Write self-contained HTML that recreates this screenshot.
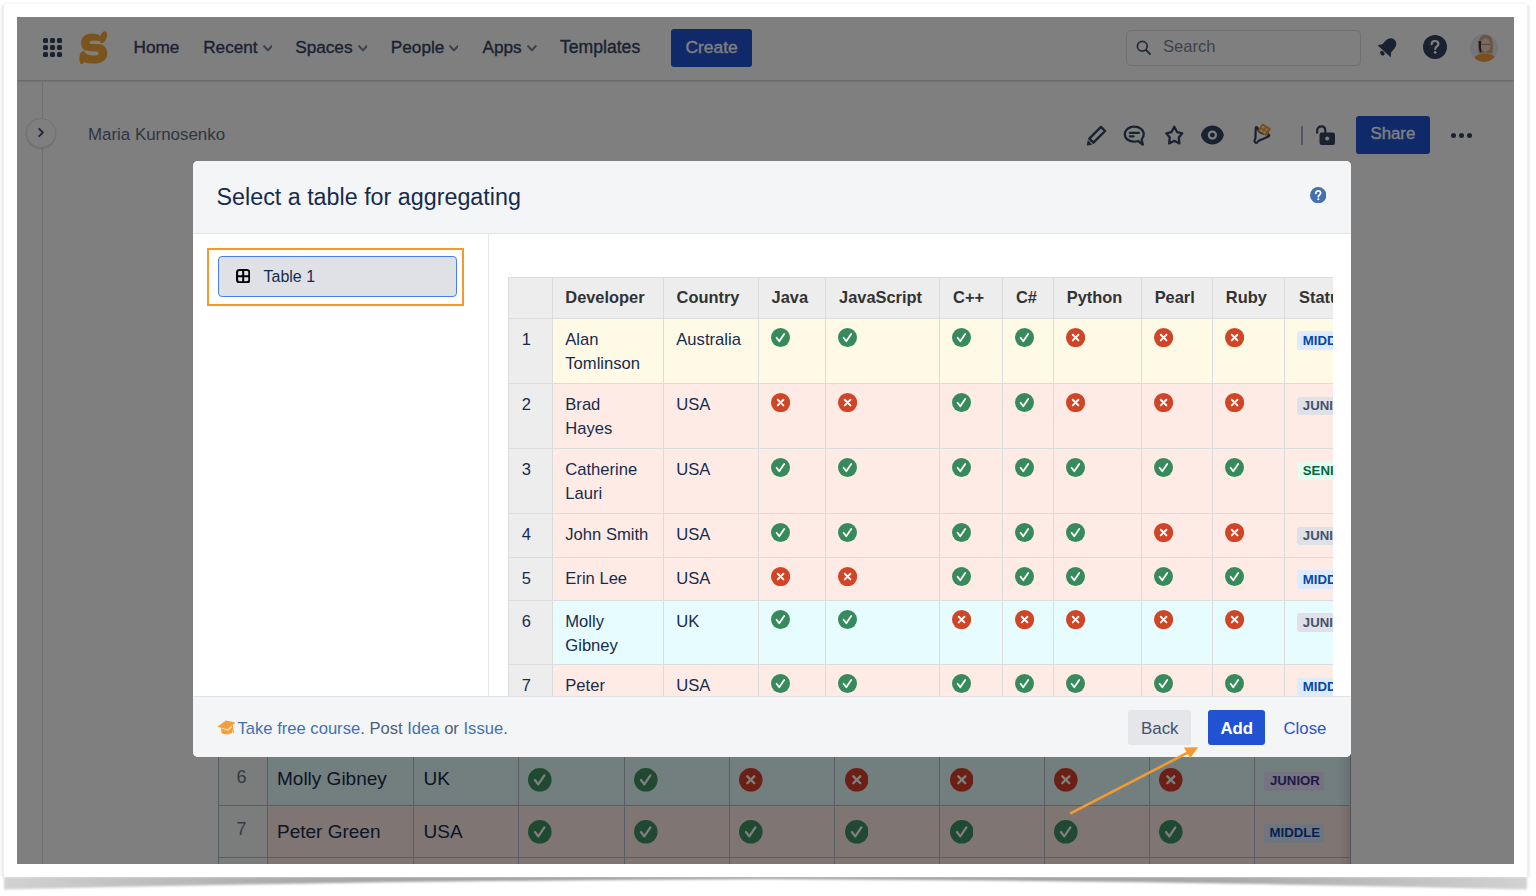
<!DOCTYPE html>
<html><head><meta charset="utf-8"><title>Select a table</title>
<style>
html,body{margin:0;padding:0;}
body{width:1536px;height:896px;position:relative;overflow:hidden;background:#fff;font-family:"Liberation Sans",sans-serif;}
.t{position:absolute;white-space:nowrap;line-height:1;-webkit-font-smoothing:antialiased;}
.abs{position:absolute;}
</style></head><body>

<svg class="abs" style="left:0;top:0" width="1536" height="896" viewBox="0 0 1536 896">
<defs>
<filter id="bl" x="-5%" y="-50%" width="110%" height="200%"><feGaussianBlur stdDeviation="1.1"/></filter>
<filter id="bl2" x="-50%" y="-5%" width="200%" height="110%"><feGaussianBlur stdDeviation="0.9"/></filter>
<linearGradient id="sg" x1="0" y1="0" x2="1" y2="0">
<stop offset="0" stop-color="#d2d2d2"/><stop offset="0.2" stop-color="#a8a8a8"/><stop offset="0.5" stop-color="#969696"/><stop offset="0.8" stop-color="#a8a8a8"/><stop offset="1" stop-color="#d2d2d2"/></linearGradient>
</defs>
<path d="M4 876.5 L1527 876.5 L1527 889.5 Q1150 880.5 768 879 Q386 880.5 4 889.5 Z" fill="url(#sg)" filter="url(#bl)"/>
<rect x="1.8" y="5" width="2.6" height="872" fill="#e4e4e4" filter="url(#bl2)"/>
<rect x="1526.6" y="5" width="2.6" height="872" fill="#e4e4e4" filter="url(#bl2)"/>
<rect x="4" y="3" width="1523" height="1.6" fill="#eeeeee" filter="url(#bl)"/>
</svg>
<div class="abs" style="left:4px;top:4px;width:1523px;height:873px;background:#fff"></div>

<div class="abs" style="left:17px;top:17px;width:1497px;height:847px;overflow:hidden;background:#fff">
<div class="abs" style="left:-17px;top:-17px;width:1536px;height:896px">
<div style="position:absolute;left:17.00px;top:17.00px;width:1497.00px;height:63.00px;background:#fff;box-shadow:0 1px 2px rgba(9,30,66,0.28)"></div>
<div style="position:absolute;left:43.00px;top:37.50px;width:5.00px;height:5.00px;background:#344563;border-radius:1.5px"></div>
<div style="position:absolute;left:50.00px;top:37.50px;width:5.00px;height:5.00px;background:#344563;border-radius:1.5px"></div>
<div style="position:absolute;left:57.00px;top:37.50px;width:5.00px;height:5.00px;background:#344563;border-radius:1.5px"></div>
<div style="position:absolute;left:43.00px;top:44.50px;width:5.00px;height:5.00px;background:#344563;border-radius:1.5px"></div>
<div style="position:absolute;left:50.00px;top:44.50px;width:5.00px;height:5.00px;background:#344563;border-radius:1.5px"></div>
<div style="position:absolute;left:57.00px;top:44.50px;width:5.00px;height:5.00px;background:#344563;border-radius:1.5px"></div>
<div style="position:absolute;left:43.00px;top:51.50px;width:5.00px;height:5.00px;background:#344563;border-radius:1.5px"></div>
<div style="position:absolute;left:50.00px;top:51.50px;width:5.00px;height:5.00px;background:#344563;border-radius:1.5px"></div>
<div style="position:absolute;left:57.00px;top:51.50px;width:5.00px;height:5.00px;background:#344563;border-radius:1.5px"></div>
<svg class="abs" style="left:74px;top:27px" width="40" height="40" viewBox="0 0 40 40">
<path fill="#F6A73A" d="M17.9 6.5 C11 6.5 7.1 10.5 7.1 16 C7.1 19.2 8.2 21.8 10.6 23.6 C12.5 24.3 16 24.3 19 24.3 C22.8 24.3 24.8 25.2 24.8 26.4 C24.8 27.8 22.6 28.6 19.2 28.6 C15.6 28.6 12.8 27.6 11.5 25.8 C10.5 24.6 9.8 24.2 9.5 24.1 C7 24.6 5.4 27 5.4 31 C5.4 34 6 37 7.5 37 C8.5 37 9.5 36.5 10 35.2 C12.5 36 16 36.6 20.5 36.6 C28.5 36.6 33.3 32.5 33.3 26.5 C33.3 22 31 19 27.5 17.6 C26 17.2 23.2 17 20.3 17 C17.5 17 15.2 16.5 15.2 15.4 C15.2 14.3 17.5 13.8 20.3 13.8 C23 13.8 25.5 14 27 14.5 L26.5 9 C25 7.5 22 6.5 17.9 6.5 Z"/>
<ellipse cx="29.4" cy="10.2" rx="3.3" ry="6.2" transform="rotate(18 29.4 10.2)" fill="#F6A73A"/>
</svg>
<div class="t" style="left:133.50px;top:39px;font-size:17.2px;color:#344563;font-weight:500;-webkit-text-stroke:0.35px #344563">Home</div>
<div class="t" style="left:203.20px;top:39px;font-size:17.2px;color:#344563;font-weight:500;-webkit-text-stroke:0.35px #344563">Recent</div>
<svg style="position:absolute;left:262.50px;top:44.60px" width="9.8" height="7.2" viewBox="0 0 9.8 7.2"><path d="M1.1 1.2 L4.9 5.4 L8.700000000000001 1.2" fill="none" stroke="#7A869A" stroke-width="2.1" stroke-linecap="round" stroke-linejoin="round"/></svg>
<div class="t" style="left:295.20px;top:39px;font-size:17.2px;color:#344563;font-weight:500;-webkit-text-stroke:0.35px #344563">Spaces</div>
<svg style="position:absolute;left:357.50px;top:44.60px" width="9.8" height="7.2" viewBox="0 0 9.8 7.2"><path d="M1.1 1.2 L4.9 5.4 L8.700000000000001 1.2" fill="none" stroke="#7A869A" stroke-width="2.1" stroke-linecap="round" stroke-linejoin="round"/></svg>
<div class="t" style="left:390.80px;top:39px;font-size:17.2px;color:#344563;font-weight:500;-webkit-text-stroke:0.35px #344563">People</div>
<svg style="position:absolute;left:448.50px;top:44.60px" width="9.8" height="7.2" viewBox="0 0 9.8 7.2"><path d="M1.1 1.2 L4.9 5.4 L8.700000000000001 1.2" fill="none" stroke="#7A869A" stroke-width="2.1" stroke-linecap="round" stroke-linejoin="round"/></svg>
<div class="t" style="left:482.50px;top:39px;font-size:17.2px;color:#344563;font-weight:500;-webkit-text-stroke:0.35px #344563">Apps</div>
<svg style="position:absolute;left:527.00px;top:44.60px" width="9.8" height="7.2" viewBox="0 0 9.8 7.2"><path d="M1.1 1.2 L4.9 5.4 L8.700000000000001 1.2" fill="none" stroke="#7A869A" stroke-width="2.1" stroke-linecap="round" stroke-linejoin="round"/></svg>
<div class="t" style="left:560.00px;top:39px;font-size:17.6px;color:#344563;font-weight:500;-webkit-text-stroke:0.35px #344563">Templates</div>
<div style="position:absolute;left:671.00px;top:29.00px;width:81.00px;height:38.00px;background:#2152D1;border-radius:3px"></div>
<div class="t" style="left:685.50px;top:39px;font-size:17.4px;color:#fff;font-weight:500;-webkit-text-stroke:0.35px #fff">Create</div>
<div style="position:absolute;left:1126.00px;top:29.50px;width:235.00px;height:36.00px;box-sizing:border-box;border:1px solid #DFE1E6;border-radius:5px;background:#fff"></div>
<svg class="abs" style="left:1136px;top:40px" width="16" height="15" viewBox="0 0 16 15">
<circle cx="6.3" cy="6.3" r="4.9" fill="none" stroke="#42526E" stroke-width="1.7"/><path d="M10 10 L14 14" stroke="#42526E" stroke-width="1.8" stroke-linecap="round"/></svg>
<div class="t" style="left:1163.00px;top:39px;font-size:16.6px;color:#7A869A;font-weight:400;">Search</div>
<svg class="abs" style="left:1375px;top:35px" width="25" height="25" viewBox="0 0 25 25">
<g transform="rotate(42 12.5 12.5)"><path d="M12.5 2.2 C8.4 2.2 6.6 5.5 6.6 9.2 L6.6 13.6 L3.6 17.6 L21.4 17.6 L18.4 13.6 L18.4 9.2 C18.4 5.5 16.6 2.2 12.5 2.2 Z" fill="#344563"/>
<ellipse cx="12.5" cy="20.2" rx="2.6" ry="1.9" fill="#344563"/></g></svg>
<svg class="abs" style="left:1423px;top:35px" width="24" height="24" viewBox="0 0 24 24">
<circle cx="12" cy="12" r="12" fill="#344563"/>
<path d="M8.6 9.3 C8.6 7.2 10.1 6 12 6 C13.9 6 15.4 7.2 15.4 9 C15.4 11.3 12.2 11.5 12.2 14" fill="none" stroke="#fff" stroke-width="2.2" stroke-linecap="round"/>
<circle cx="12.2" cy="17.4" r="1.4" fill="#fff"/></svg>
<svg class="abs" style="left:1470.3px;top:33.5px" width="28" height="28" viewBox="0 0 28 28">
<defs><clipPath id="av"><circle cx="14" cy="14" r="13.9"/></clipPath></defs>
<g clip-path="url(#av)"><rect width="28" height="28" fill="#E8EBF0"/>
<path d="M8.5 19.5 C8 12 8.3 5 11.5 2 C13.5 0.5 18 0.5 20.3 2.3 C23 5 23.3 12 22.5 19.5 Z" fill="#D9A985"/>
<ellipse cx="15.4" cy="11" rx="5" ry="6.8" fill="#F3D6C4"/>
<path d="M8.6 7 C8.4 11 8.8 15.5 10.2 18.5 L11.6 18 C10.8 14.5 10.8 10.5 11.3 7 Z" fill="#4A3530"/>
<path d="M11 10.3 L20 10.3" stroke="#8A6A5A" stroke-width="0.7"/>
<rect x="13.9" y="17" width="3" height="4" fill="#E9C3AE"/>
<path d="M3 29 C3.5 23 7 20.3 12 20 L19 20 C23.5 20.3 25.5 23 25.8 29 Z" fill="#F09E3A"/></g></svg>
<div style="position:absolute;left:42.00px;top:80.00px;width:1.00px;height:784.00px;background:#E0E2E6"></div>
<div style="position:absolute;left:26.00px;top:117.50px;width:30.00px;height:30.00px;box-sizing:border-box;border:1px solid #E4E6EA;border-radius:50%;background:#fff;box-shadow:0 1px 2px rgba(9,30,66,0.18)"></div>
<svg class="abs" style="left:36px;top:127px" width="10" height="11" viewBox="0 0 10 11">
<path d="M3.2 1.8 L6.9 5.5 L3.2 9.2" fill="none" stroke="#42526E" stroke-width="1.9" stroke-linecap="round" stroke-linejoin="round"/></svg>
<div class="t" style="left:88.00px;top:127px;font-size:16.9px;color:#5E6C84;font-weight:400;">Maria Kurnosenko</div>
<svg class="abs" style="left:1085px;top:124px" width="23" height="23" viewBox="0 0 23 23">
<path d="M16 2.9 L20.1 7 L8.4 18.7 L4.3 14.6 Z" fill="none" stroke="#344563" stroke-width="2.4" stroke-linejoin="round"/>
<path d="M2.1 21.2 L2.9 16.6 L6.8 20.4 Z" fill="#344563" stroke="#344563" stroke-width="0.6" stroke-linejoin="round"/></svg>
<svg class="abs" style="left:1122px;top:124px" width="24" height="23" viewBox="0 0 24 23">
<path d="M12.2 2.6 C6.8 2.6 2.8 5.9 2.8 10.2 C2.8 14.5 6.8 17.6 12.2 17.6 C13.6 17.6 14.9 17.4 16 17 L20.8 20.6 L19.6 15.2 C21 13.8 21.7 12.1 21.7 10.2 C21.7 5.9 17.6 2.6 12.2 2.6 Z" fill="none" stroke="#344563" stroke-width="2.3" stroke-linejoin="round"/>
<path d="M7.8 8.8 L17 8.8 M7.8 12.3 L11.6 12.3" stroke="#344563" stroke-width="2.2" stroke-linecap="round"/></svg>
<svg class="abs" style="left:1163px;top:124px" width="23" height="23" viewBox="0 0 23 23">
<path d="M11.3 2.8 L14.2 8.2 L19.3 9.3 L15.8 13.4 L16.4 19.4 L11.3 16.8 L6.2 19.4 L6.8 13.4 L3.3 9.3 L8.4 8.2 Z" fill="none" stroke="#344563" stroke-width="2.3" stroke-linejoin="round"/></svg>
<svg class="abs" style="left:1200px;top:124px" width="25" height="23" viewBox="0 0 25 23">
<path d="M0.9 11.1 C2.2 5.2 6.8 1.6 12.4 1.6 C18 1.6 22.6 5.2 23.9 11.1 C22.6 17 18 20.6 12.4 20.6 C6.8 20.6 2.2 17 0.9 11.1 Z" fill="#344563"/>
<circle cx="12.4" cy="11.1" r="4.6" fill="#fff"/><circle cx="12.4" cy="11.1" r="2.45" fill="#344563"/></svg>
<svg class="abs" style="left:1245px;top:118px" width="35" height="32" viewBox="0 0 35 32">
<path d="M10.9 9.2 C12 8.9 12.6 9.6 12.9 11.2 C13.6 14 17.5 16.6 22.6 16.1 C24.2 16.2 24.6 17.4 23.8 18.2 C21 19.8 17.2 21 14.2 22.5 C13.3 23 12.8 23.8 12 24.6 C11.1 25.2 10.2 24.7 9.6 23.4 C9.3 22.5 9.8 21.2 10.5 20 C10.6 17 10.4 13 10.9 9.2 Z" fill="none" stroke="#344563" stroke-width="2.2" stroke-linejoin="round"/>
<path d="M17.5 6.2 L25.1 10.8 L21.3 17.3 L13.7 12.3 Z" fill="#F0A030" stroke="#F0A030" stroke-width="1.4" stroke-linejoin="round"/>
<circle cx="18.2" cy="9.3" r="1.25" fill="#fff" opacity=".8"/><circle cx="21.4" cy="11.4" r="1.25" fill="#fff" opacity=".8"/>
<circle cx="16.3" cy="12.7" r="1.25" fill="#fff" opacity=".8"/><circle cx="19.5" cy="14.6" r="1.25" fill="#fff" opacity=".8"/>
</svg>
<div style="position:absolute;left:1301.00px;top:126.00px;width:2.00px;height:18.50px;background:#A5ADBA;border-radius:1px"></div>
<svg class="abs" style="left:1314px;top:124px" width="23" height="23" viewBox="0 0 23 23">
<path d="M3.2 9.6 L3.2 6.6 C3.2 3.8 5.1 2.4 7.3 2.4 C9.5 2.4 11.3 3.8 11.3 6.6 L11.3 9.5" fill="none" stroke="#344563" stroke-width="2.2"/>
<rect x="5.5" y="8.6" width="15.5" height="12.4" rx="2.2" fill="#344563"/><circle cx="13.2" cy="14.6" r="2" fill="#fff"/></svg>
<div style="position:absolute;left:1356.00px;top:115.50px;width:74.00px;height:38.00px;background:#2152D1;border-radius:3px"></div>
<div class="t" style="left:1370.50px;top:126px;font-size:16.8px;color:#fff;font-weight:500;-webkit-text-stroke:0.35px #fff">Share</div>
<div class="abs" style="left:1450.5px;top:132.5px;width:5px;height:5px;border-radius:50%;background:#344563"></div>
<div class="abs" style="left:1458.7px;top:132.5px;width:5px;height:5px;border-radius:50%;background:#344563"></div>
<div class="abs" style="left:1466.9px;top:132.5px;width:5px;height:5px;border-radius:50%;background:#344563"></div>
<div style="position:absolute;left:218.00px;top:700.00px;width:49.40px;height:105.50px;background:#F7F8F9"></div>
<div style="position:absolute;left:267.40px;top:700.00px;width:1083.40px;height:105.50px;background:#E6FCFF"></div>
<div style="position:absolute;left:218.00px;top:805.50px;width:49.40px;height:52.00px;background:#F7F8F9"></div>
<div style="position:absolute;left:267.40px;top:805.50px;width:1083.40px;height:52.00px;background:#FFEBE6"></div>
<div style="position:absolute;left:218.00px;top:857.50px;width:49.40px;height:52.50px;background:#F7F8F9"></div>
<div style="position:absolute;left:267.40px;top:857.50px;width:1083.40px;height:52.50px;background:#FFEBE6"></div>
<div style="position:absolute;left:217.50px;top:700.00px;width:1.00px;height:200.00px;background:#B5BCC8"></div>
<div style="position:absolute;left:266.90px;top:700.00px;width:1.00px;height:200.00px;background:#B5BCC8"></div>
<div style="position:absolute;left:412.70px;top:700.00px;width:1.00px;height:200.00px;background:#B5BCC8"></div>
<div style="position:absolute;left:517.50px;top:700.00px;width:1.00px;height:200.00px;background:#B5BCC8"></div>
<div style="position:absolute;left:623.70px;top:700.00px;width:1.00px;height:200.00px;background:#B5BCC8"></div>
<div style="position:absolute;left:728.80px;top:700.00px;width:1.00px;height:200.00px;background:#B5BCC8"></div>
<div style="position:absolute;left:834.30px;top:700.00px;width:1.00px;height:200.00px;background:#B5BCC8"></div>
<div style="position:absolute;left:939.00px;top:700.00px;width:1.00px;height:200.00px;background:#B5BCC8"></div>
<div style="position:absolute;left:1043.70px;top:700.00px;width:1.00px;height:200.00px;background:#B5BCC8"></div>
<div style="position:absolute;left:1148.80px;top:700.00px;width:1.00px;height:200.00px;background:#B5BCC8"></div>
<div style="position:absolute;left:1254.40px;top:700.00px;width:1.00px;height:200.00px;background:#B5BCC8"></div>
<div style="position:absolute;left:1350.30px;top:700.00px;width:1.00px;height:200.00px;background:#B5BCC8"></div>
<div style="position:absolute;left:218.00px;top:805.00px;width:1132.80px;height:1.00px;background:#B5BCC8"></div>
<div style="position:absolute;left:218.00px;top:857.00px;width:1132.80px;height:1.00px;background:#B5BCC8"></div>
<div style="position:absolute;left:218.00px;top:909.50px;width:1132.80px;height:1.00px;background:#B5BCC8"></div>
<div style="position:absolute;left:1338.00px;top:700.00px;width:13.00px;height:200.00px;background:linear-gradient(to right, rgba(0,0,0,0), rgba(0,0,0,0.10))"></div>
<div class="t" style="left:236.50px;top:768px;font-size:18.0px;color:#6B778C;font-weight:400;">6</div>
<div class="t" style="left:277.00px;top:769px;font-size:19.0px;color:#172B4D;font-weight:400;">Molly Gibney</div>
<div class="t" style="left:423.50px;top:769px;font-size:19.0px;color:#172B4D;font-weight:400;">UK</div>
<svg style="position:absolute;left:528.10px;top:768.20px" width="23.6" height="23.6" viewBox="0 0 20 20"><circle cx="10" cy="10" r="10" fill="#3E9463"/><path d="M5.9 10.2 L8.7 13.9 L13.9 6.3" fill="none" stroke="#fff" stroke-width="1.9" stroke-linecap="round" stroke-linejoin="round"/></svg>
<svg style="position:absolute;left:634.30px;top:768.20px" width="23.6" height="23.6" viewBox="0 0 20 20"><circle cx="10" cy="10" r="10" fill="#3E9463"/><path d="M5.9 10.2 L8.7 13.9 L13.9 6.3" fill="none" stroke="#fff" stroke-width="1.9" stroke-linecap="round" stroke-linejoin="round"/></svg>
<svg style="position:absolute;left:739.40px;top:768.20px" width="23.6" height="23.6" viewBox="0 0 20 20"><circle cx="10" cy="10" r="10" fill="#D8402B"/><path d="M7.05 7.05 L12.95 12.95 M12.95 7.05 L7.05 12.95" fill="none" stroke="#fff" stroke-width="2" stroke-linecap="round"/></svg>
<svg style="position:absolute;left:844.90px;top:768.20px" width="23.6" height="23.6" viewBox="0 0 20 20"><circle cx="10" cy="10" r="10" fill="#D8402B"/><path d="M7.05 7.05 L12.95 12.95 M12.95 7.05 L7.05 12.95" fill="none" stroke="#fff" stroke-width="2" stroke-linecap="round"/></svg>
<svg style="position:absolute;left:949.60px;top:768.20px" width="23.6" height="23.6" viewBox="0 0 20 20"><circle cx="10" cy="10" r="10" fill="#D8402B"/><path d="M7.05 7.05 L12.95 12.95 M12.95 7.05 L7.05 12.95" fill="none" stroke="#fff" stroke-width="2" stroke-linecap="round"/></svg>
<svg style="position:absolute;left:1054.30px;top:768.20px" width="23.6" height="23.6" viewBox="0 0 20 20"><circle cx="10" cy="10" r="10" fill="#D8402B"/><path d="M7.05 7.05 L12.95 12.95 M12.95 7.05 L7.05 12.95" fill="none" stroke="#fff" stroke-width="2" stroke-linecap="round"/></svg>
<svg style="position:absolute;left:1159.40px;top:768.20px" width="23.6" height="23.6" viewBox="0 0 20 20"><circle cx="10" cy="10" r="10" fill="#D8402B"/><path d="M7.05 7.05 L12.95 12.95 M12.95 7.05 L7.05 12.95" fill="none" stroke="#fff" stroke-width="2" stroke-linecap="round"/></svg>
<div style="position:absolute;left:1264.20px;top:772.20px;width:60.00px;height:19.20px;background:#EAE6FF;border-radius:3px"></div>
<div class="t" style="left:1270.00px;top:774px;font-size:13.2px;color:#403294;font-weight:700;">JUNIOR</div>
<div class="t" style="left:236.50px;top:820px;font-size:18.0px;color:#6B778C;font-weight:400;">7</div>
<div class="t" style="left:277.00px;top:822px;font-size:19.0px;color:#172B4D;font-weight:400;">Peter Green</div>
<div class="t" style="left:423.50px;top:822px;font-size:19.0px;color:#172B4D;font-weight:400;">USA</div>
<svg style="position:absolute;left:528.10px;top:820.20px" width="23.6" height="23.6" viewBox="0 0 20 20"><circle cx="10" cy="10" r="10" fill="#3E9463"/><path d="M5.9 10.2 L8.7 13.9 L13.9 6.3" fill="none" stroke="#fff" stroke-width="1.9" stroke-linecap="round" stroke-linejoin="round"/></svg>
<svg style="position:absolute;left:634.30px;top:820.20px" width="23.6" height="23.6" viewBox="0 0 20 20"><circle cx="10" cy="10" r="10" fill="#3E9463"/><path d="M5.9 10.2 L8.7 13.9 L13.9 6.3" fill="none" stroke="#fff" stroke-width="1.9" stroke-linecap="round" stroke-linejoin="round"/></svg>
<svg style="position:absolute;left:739.40px;top:820.20px" width="23.6" height="23.6" viewBox="0 0 20 20"><circle cx="10" cy="10" r="10" fill="#3E9463"/><path d="M5.9 10.2 L8.7 13.9 L13.9 6.3" fill="none" stroke="#fff" stroke-width="1.9" stroke-linecap="round" stroke-linejoin="round"/></svg>
<svg style="position:absolute;left:844.90px;top:820.20px" width="23.6" height="23.6" viewBox="0 0 20 20"><circle cx="10" cy="10" r="10" fill="#3E9463"/><path d="M5.9 10.2 L8.7 13.9 L13.9 6.3" fill="none" stroke="#fff" stroke-width="1.9" stroke-linecap="round" stroke-linejoin="round"/></svg>
<svg style="position:absolute;left:949.60px;top:820.20px" width="23.6" height="23.6" viewBox="0 0 20 20"><circle cx="10" cy="10" r="10" fill="#3E9463"/><path d="M5.9 10.2 L8.7 13.9 L13.9 6.3" fill="none" stroke="#fff" stroke-width="1.9" stroke-linecap="round" stroke-linejoin="round"/></svg>
<svg style="position:absolute;left:1054.30px;top:820.20px" width="23.6" height="23.6" viewBox="0 0 20 20"><circle cx="10" cy="10" r="10" fill="#3E9463"/><path d="M5.9 10.2 L8.7 13.9 L13.9 6.3" fill="none" stroke="#fff" stroke-width="1.9" stroke-linecap="round" stroke-linejoin="round"/></svg>
<svg style="position:absolute;left:1159.40px;top:820.20px" width="23.6" height="23.6" viewBox="0 0 20 20"><circle cx="10" cy="10" r="10" fill="#3E9463"/><path d="M5.9 10.2 L8.7 13.9 L13.9 6.3" fill="none" stroke="#fff" stroke-width="1.9" stroke-linecap="round" stroke-linejoin="round"/></svg>
<div style="position:absolute;left:1264.20px;top:824.20px;width:60.00px;height:19.20px;background:#DEEBFF;border-radius:3px"></div>
<div class="t" style="left:1269.50px;top:826px;font-size:13.2px;color:#0747A6;font-weight:700;">MIDDLE</div>
</div></div>
<div class="abs" style="left:17px;top:17px;width:1497px;height:847px;background:rgba(0,0,0,0.5)"></div>
<div class="abs" style="left:193px;top:161px;width:1157.7px;height:596px;border-radius:5px;overflow:hidden;background:#fff">
<div class="abs" style="left:-193px;top:-161px;width:1536px;height:896px">
<div style="position:absolute;left:193.00px;top:161.00px;width:1158.00px;height:72.50px;background:#F4F5F7"></div>
<div style="position:absolute;left:193.00px;top:232.80px;width:1158.00px;height:1.00px;background:#E1E3E8"></div>
<div class="t" style="left:216.50px;top:186px;font-size:23.3px;color:#172B4D;font-weight:400;">Select a table for aggregating</div>
<svg class="abs" style="left:1309.8px;top:187.1px" width="16.4" height="16.4" viewBox="0 0 20 20">
<circle cx="10" cy="10" r="10" fill="#4271AD"/>
<path d="M7 7.8 C7 5.9 8.3 4.7 10 4.7 C11.8 4.7 13 5.8 13 7.4 C13 9.6 10.2 9.6 10.2 12" fill="none" stroke="#fff" stroke-width="2.1" stroke-linecap="round"/>
<circle cx="10.2" cy="15" r="1.3" fill="#fff"/></svg>
<div style="position:absolute;left:488.00px;top:233.80px;width:1.00px;height:462.00px;background:#E6E8EC"></div>
<div style="position:absolute;left:206.70px;top:247.70px;width:257.80px;height:58.70px;box-sizing:border-box;border:2px solid #F39A2E"></div>
<div style="position:absolute;left:218.00px;top:256.00px;width:238.60px;height:40.50px;box-sizing:border-box;border:1px solid #4A7DF0;border-radius:4px;background:#DFE1E6"></div>
<svg class="abs" style="left:235.7px;top:269px" width="14.4" height="14.4" viewBox="0 0 15 15">
<rect x="1.1" y="1.1" width="12.8" height="12.8" rx="2.6" fill="none" stroke="#000" stroke-width="2.2"/>
<path d="M7.5 1 L7.5 14 M1 7.5 L14 7.5" stroke="#000" stroke-width="2.1"/></svg>
<div class="t" style="left:263.50px;top:269px;font-size:16.0px;color:#172B4D;font-weight:400;">Table 1</div>
<div class="abs" style="left:0;top:0;width:1332.5px;height:696px;overflow:hidden">
<div style="position:absolute;left:508.40px;top:277.20px;width:891.60px;height:41.00px;background:#EDEDEE"></div>
<div style="position:absolute;left:508.40px;top:318.20px;width:43.60px;height:65.40px;background:#EDEDEE"></div>
<div style="position:absolute;left:552.00px;top:318.20px;width:848.00px;height:65.40px;background:#FFFAE6"></div>
<div style="position:absolute;left:508.40px;top:383.60px;width:43.60px;height:64.90px;background:#EDEDEE"></div>
<div style="position:absolute;left:552.00px;top:383.60px;width:848.00px;height:64.90px;background:#FFEBE6"></div>
<div style="position:absolute;left:508.40px;top:448.50px;width:43.60px;height:65.10px;background:#EDEDEE"></div>
<div style="position:absolute;left:552.00px;top:448.50px;width:848.00px;height:65.10px;background:#FFEBE6"></div>
<div style="position:absolute;left:508.40px;top:513.60px;width:43.60px;height:43.70px;background:#EDEDEE"></div>
<div style="position:absolute;left:552.00px;top:513.60px;width:848.00px;height:43.70px;background:#FFEBE6"></div>
<div style="position:absolute;left:508.40px;top:557.30px;width:43.60px;height:43.10px;background:#EDEDEE"></div>
<div style="position:absolute;left:552.00px;top:557.30px;width:848.00px;height:43.10px;background:#FFEBE6"></div>
<div style="position:absolute;left:508.40px;top:600.40px;width:43.60px;height:64.20px;background:#EDEDEE"></div>
<div style="position:absolute;left:552.00px;top:600.40px;width:848.00px;height:64.20px;background:#E6FCFF"></div>
<div style="position:absolute;left:508.40px;top:664.60px;width:43.60px;height:64.90px;background:#EDEDEE"></div>
<div style="position:absolute;left:552.00px;top:664.60px;width:848.00px;height:64.90px;background:#FFEBE6"></div>
<div style="position:absolute;left:507.90px;top:277.20px;width:1.00px;height:452.30px;background:#DCDCDC"></div>
<div style="position:absolute;left:551.50px;top:277.20px;width:1.00px;height:452.30px;background:#DCDCDC"></div>
<div style="position:absolute;left:662.80px;top:277.20px;width:1.00px;height:452.30px;background:#DCDCDC"></div>
<div style="position:absolute;left:757.80px;top:277.20px;width:1.00px;height:452.30px;background:#DCDCDC"></div>
<div style="position:absolute;left:825.30px;top:277.20px;width:1.00px;height:452.30px;background:#DCDCDC"></div>
<div style="position:absolute;left:939.30px;top:277.20px;width:1.00px;height:452.30px;background:#DCDCDC"></div>
<div style="position:absolute;left:1002.10px;top:277.20px;width:1.00px;height:452.30px;background:#DCDCDC"></div>
<div style="position:absolute;left:1053.00px;top:277.20px;width:1.00px;height:452.30px;background:#DCDCDC"></div>
<div style="position:absolute;left:1140.90px;top:277.20px;width:1.00px;height:452.30px;background:#DCDCDC"></div>
<div style="position:absolute;left:1212.00px;top:277.20px;width:1.00px;height:452.30px;background:#DCDCDC"></div>
<div style="position:absolute;left:1284.00px;top:277.20px;width:1.00px;height:452.30px;background:#DCDCDC"></div>
<div style="position:absolute;left:1399.50px;top:277.20px;width:1.00px;height:452.30px;background:#DCDCDC"></div>
<div style="position:absolute;left:508.40px;top:276.70px;width:891.60px;height:1.00px;background:#DCDCDC"></div>
<div style="position:absolute;left:508.40px;top:317.70px;width:891.60px;height:1.00px;background:#DCDCDC"></div>
<div style="position:absolute;left:508.40px;top:383.10px;width:891.60px;height:1.00px;background:#DCDCDC"></div>
<div style="position:absolute;left:508.40px;top:448.00px;width:891.60px;height:1.00px;background:#DCDCDC"></div>
<div style="position:absolute;left:508.40px;top:513.10px;width:891.60px;height:1.00px;background:#DCDCDC"></div>
<div style="position:absolute;left:508.40px;top:556.80px;width:891.60px;height:1.00px;background:#DCDCDC"></div>
<div style="position:absolute;left:508.40px;top:599.90px;width:891.60px;height:1.00px;background:#DCDCDC"></div>
<div style="position:absolute;left:508.40px;top:664.10px;width:891.60px;height:1.00px;background:#DCDCDC"></div>
<div style="position:absolute;left:508.40px;top:729.00px;width:891.60px;height:1.00px;background:#DCDCDC"></div>
<div class="t" style="left:565.30px;top:289px;font-size:16.4px;color:#333333;font-weight:700;">Developer</div>
<div class="t" style="left:676.60px;top:289px;font-size:16.4px;color:#333333;font-weight:700;">Country</div>
<div class="t" style="left:771.60px;top:289px;font-size:16.4px;color:#333333;font-weight:700;">Java</div>
<div class="t" style="left:839.10px;top:289px;font-size:16.4px;color:#333333;font-weight:700;">JavaScript</div>
<div class="t" style="left:953.10px;top:289px;font-size:16.4px;color:#333333;font-weight:700;">C++</div>
<div class="t" style="left:1015.90px;top:289px;font-size:16.4px;color:#333333;font-weight:700;">C#</div>
<div class="t" style="left:1066.80px;top:289px;font-size:16.4px;color:#333333;font-weight:700;">Python</div>
<div class="t" style="left:1154.70px;top:289px;font-size:16.4px;color:#333333;font-weight:700;">Pearl</div>
<div class="t" style="left:1225.80px;top:289px;font-size:16.4px;color:#333333;font-weight:700;">Ruby</div>
<div class="t" style="left:1299.00px;top:289px;font-size:16.4px;color:#333333;font-weight:700;">Status</div>
<div class="t" style="left:521.70px;top:331px;font-size:16.5px;color:#172B4D;font-weight:400;">1</div>
<div class="t" style="left:565.30px;top:332px;font-size:16.6px;color:#172B4D;font-weight:400;">Alan</div>
<div class="t" style="left:565.30px;top:356px;font-size:16.6px;color:#172B4D;font-weight:400;">Tomlinson</div>
<div class="t" style="left:676.30px;top:332px;font-size:16.6px;color:#172B4D;font-weight:400;">Australia</div>
<svg style="position:absolute;left:770.60px;top:327.65px" width="19.0" height="19.0" viewBox="0 0 20 20"><circle cx="10" cy="10" r="10" fill="#378A5C"/><path d="M5.9 10.2 L8.7 13.9 L13.9 6.3" fill="none" stroke="#fff" stroke-width="1.9" stroke-linecap="round" stroke-linejoin="round"/></svg>
<svg style="position:absolute;left:838.10px;top:327.65px" width="19.0" height="19.0" viewBox="0 0 20 20"><circle cx="10" cy="10" r="10" fill="#378A5C"/><path d="M5.9 10.2 L8.7 13.9 L13.9 6.3" fill="none" stroke="#fff" stroke-width="1.9" stroke-linecap="round" stroke-linejoin="round"/></svg>
<svg style="position:absolute;left:952.10px;top:327.65px" width="19.0" height="19.0" viewBox="0 0 20 20"><circle cx="10" cy="10" r="10" fill="#378A5C"/><path d="M5.9 10.2 L8.7 13.9 L13.9 6.3" fill="none" stroke="#fff" stroke-width="1.9" stroke-linecap="round" stroke-linejoin="round"/></svg>
<svg style="position:absolute;left:1014.90px;top:327.65px" width="19.0" height="19.0" viewBox="0 0 20 20"><circle cx="10" cy="10" r="10" fill="#378A5C"/><path d="M5.9 10.2 L8.7 13.9 L13.9 6.3" fill="none" stroke="#fff" stroke-width="1.9" stroke-linecap="round" stroke-linejoin="round"/></svg>
<svg style="position:absolute;left:1065.70px;top:327.55px" width="19.2" height="19.2" viewBox="0 0 20 20"><circle cx="10" cy="10" r="10" fill="#D14527"/><path d="M7.05 7.05 L12.95 12.95 M12.95 7.05 L7.05 12.95" fill="none" stroke="#fff" stroke-width="2" stroke-linecap="round"/></svg>
<svg style="position:absolute;left:1153.60px;top:327.55px" width="19.2" height="19.2" viewBox="0 0 20 20"><circle cx="10" cy="10" r="10" fill="#D14527"/><path d="M7.05 7.05 L12.95 12.95 M12.95 7.05 L7.05 12.95" fill="none" stroke="#fff" stroke-width="2" stroke-linecap="round"/></svg>
<svg style="position:absolute;left:1224.70px;top:327.55px" width="19.2" height="19.2" viewBox="0 0 20 20"><circle cx="10" cy="10" r="10" fill="#D14527"/><path d="M7.05 7.05 L12.95 12.95 M12.95 7.05 L7.05 12.95" fill="none" stroke="#fff" stroke-width="2" stroke-linecap="round"/></svg>
<div style="position:absolute;left:1297.20px;top:331.20px;width:64.00px;height:18.50px;background:#DEEBFF;border-radius:3px"></div>
<div class="t" style="left:1302.80px;top:334px;font-size:13.2px;color:#0747A6;font-weight:700;">MIDDLE</div>
<div class="t" style="left:521.70px;top:396px;font-size:16.5px;color:#172B4D;font-weight:400;">2</div>
<div class="t" style="left:565.30px;top:397px;font-size:16.6px;color:#172B4D;font-weight:400;">Brad</div>
<div class="t" style="left:565.30px;top:421px;font-size:16.6px;color:#172B4D;font-weight:400;">Hayes</div>
<div class="t" style="left:676.30px;top:397px;font-size:16.6px;color:#172B4D;font-weight:400;">USA</div>
<svg style="position:absolute;left:770.50px;top:392.95px" width="19.2" height="19.2" viewBox="0 0 20 20"><circle cx="10" cy="10" r="10" fill="#D14527"/><path d="M7.05 7.05 L12.95 12.95 M12.95 7.05 L7.05 12.95" fill="none" stroke="#fff" stroke-width="2" stroke-linecap="round"/></svg>
<svg style="position:absolute;left:838.00px;top:392.95px" width="19.2" height="19.2" viewBox="0 0 20 20"><circle cx="10" cy="10" r="10" fill="#D14527"/><path d="M7.05 7.05 L12.95 12.95 M12.95 7.05 L7.05 12.95" fill="none" stroke="#fff" stroke-width="2" stroke-linecap="round"/></svg>
<svg style="position:absolute;left:952.10px;top:393.05px" width="19.0" height="19.0" viewBox="0 0 20 20"><circle cx="10" cy="10" r="10" fill="#378A5C"/><path d="M5.9 10.2 L8.7 13.9 L13.9 6.3" fill="none" stroke="#fff" stroke-width="1.9" stroke-linecap="round" stroke-linejoin="round"/></svg>
<svg style="position:absolute;left:1014.90px;top:393.05px" width="19.0" height="19.0" viewBox="0 0 20 20"><circle cx="10" cy="10" r="10" fill="#378A5C"/><path d="M5.9 10.2 L8.7 13.9 L13.9 6.3" fill="none" stroke="#fff" stroke-width="1.9" stroke-linecap="round" stroke-linejoin="round"/></svg>
<svg style="position:absolute;left:1065.70px;top:392.95px" width="19.2" height="19.2" viewBox="0 0 20 20"><circle cx="10" cy="10" r="10" fill="#D14527"/><path d="M7.05 7.05 L12.95 12.95 M12.95 7.05 L7.05 12.95" fill="none" stroke="#fff" stroke-width="2" stroke-linecap="round"/></svg>
<svg style="position:absolute;left:1153.60px;top:392.95px" width="19.2" height="19.2" viewBox="0 0 20 20"><circle cx="10" cy="10" r="10" fill="#D14527"/><path d="M7.05 7.05 L12.95 12.95 M12.95 7.05 L7.05 12.95" fill="none" stroke="#fff" stroke-width="2" stroke-linecap="round"/></svg>
<svg style="position:absolute;left:1224.70px;top:392.95px" width="19.2" height="19.2" viewBox="0 0 20 20"><circle cx="10" cy="10" r="10" fill="#D14527"/><path d="M7.05 7.05 L12.95 12.95 M12.95 7.05 L7.05 12.95" fill="none" stroke="#fff" stroke-width="2" stroke-linecap="round"/></svg>
<div style="position:absolute;left:1297.20px;top:396.60px;width:64.00px;height:18.50px;background:#DFE1E6;border-radius:3px"></div>
<div class="t" style="left:1302.80px;top:399px;font-size:13.2px;color:#42526E;font-weight:700;">JUNIOR</div>
<div class="t" style="left:521.70px;top:461px;font-size:16.5px;color:#172B4D;font-weight:400;">3</div>
<div class="t" style="left:565.30px;top:462px;font-size:16.6px;color:#172B4D;font-weight:400;">Catherine</div>
<div class="t" style="left:565.30px;top:486px;font-size:16.6px;color:#172B4D;font-weight:400;">Lauri</div>
<div class="t" style="left:676.30px;top:462px;font-size:16.6px;color:#172B4D;font-weight:400;">USA</div>
<svg style="position:absolute;left:770.60px;top:457.95px" width="19.0" height="19.0" viewBox="0 0 20 20"><circle cx="10" cy="10" r="10" fill="#378A5C"/><path d="M5.9 10.2 L8.7 13.9 L13.9 6.3" fill="none" stroke="#fff" stroke-width="1.9" stroke-linecap="round" stroke-linejoin="round"/></svg>
<svg style="position:absolute;left:838.10px;top:457.95px" width="19.0" height="19.0" viewBox="0 0 20 20"><circle cx="10" cy="10" r="10" fill="#378A5C"/><path d="M5.9 10.2 L8.7 13.9 L13.9 6.3" fill="none" stroke="#fff" stroke-width="1.9" stroke-linecap="round" stroke-linejoin="round"/></svg>
<svg style="position:absolute;left:952.10px;top:457.95px" width="19.0" height="19.0" viewBox="0 0 20 20"><circle cx="10" cy="10" r="10" fill="#378A5C"/><path d="M5.9 10.2 L8.7 13.9 L13.9 6.3" fill="none" stroke="#fff" stroke-width="1.9" stroke-linecap="round" stroke-linejoin="round"/></svg>
<svg style="position:absolute;left:1014.90px;top:457.95px" width="19.0" height="19.0" viewBox="0 0 20 20"><circle cx="10" cy="10" r="10" fill="#378A5C"/><path d="M5.9 10.2 L8.7 13.9 L13.9 6.3" fill="none" stroke="#fff" stroke-width="1.9" stroke-linecap="round" stroke-linejoin="round"/></svg>
<svg style="position:absolute;left:1065.80px;top:457.95px" width="19.0" height="19.0" viewBox="0 0 20 20"><circle cx="10" cy="10" r="10" fill="#378A5C"/><path d="M5.9 10.2 L8.7 13.9 L13.9 6.3" fill="none" stroke="#fff" stroke-width="1.9" stroke-linecap="round" stroke-linejoin="round"/></svg>
<svg style="position:absolute;left:1153.70px;top:457.95px" width="19.0" height="19.0" viewBox="0 0 20 20"><circle cx="10" cy="10" r="10" fill="#378A5C"/><path d="M5.9 10.2 L8.7 13.9 L13.9 6.3" fill="none" stroke="#fff" stroke-width="1.9" stroke-linecap="round" stroke-linejoin="round"/></svg>
<svg style="position:absolute;left:1224.80px;top:457.95px" width="19.0" height="19.0" viewBox="0 0 20 20"><circle cx="10" cy="10" r="10" fill="#378A5C"/><path d="M5.9 10.2 L8.7 13.9 L13.9 6.3" fill="none" stroke="#fff" stroke-width="1.9" stroke-linecap="round" stroke-linejoin="round"/></svg>
<div style="position:absolute;left:1297.20px;top:461.50px;width:64.00px;height:18.50px;background:#E3FCEF;border-radius:3px"></div>
<div class="t" style="left:1302.80px;top:464px;font-size:13.2px;color:#006644;font-weight:700;">SENIOR</div>
<div class="t" style="left:521.70px;top:526px;font-size:16.5px;color:#172B4D;font-weight:400;">4</div>
<div class="t" style="left:565.30px;top:527px;font-size:16.6px;color:#172B4D;font-weight:400;">John Smith</div>
<div class="t" style="left:676.30px;top:527px;font-size:16.6px;color:#172B4D;font-weight:400;">USA</div>
<svg style="position:absolute;left:770.60px;top:523.05px" width="19.0" height="19.0" viewBox="0 0 20 20"><circle cx="10" cy="10" r="10" fill="#378A5C"/><path d="M5.9 10.2 L8.7 13.9 L13.9 6.3" fill="none" stroke="#fff" stroke-width="1.9" stroke-linecap="round" stroke-linejoin="round"/></svg>
<svg style="position:absolute;left:838.10px;top:523.05px" width="19.0" height="19.0" viewBox="0 0 20 20"><circle cx="10" cy="10" r="10" fill="#378A5C"/><path d="M5.9 10.2 L8.7 13.9 L13.9 6.3" fill="none" stroke="#fff" stroke-width="1.9" stroke-linecap="round" stroke-linejoin="round"/></svg>
<svg style="position:absolute;left:952.10px;top:523.05px" width="19.0" height="19.0" viewBox="0 0 20 20"><circle cx="10" cy="10" r="10" fill="#378A5C"/><path d="M5.9 10.2 L8.7 13.9 L13.9 6.3" fill="none" stroke="#fff" stroke-width="1.9" stroke-linecap="round" stroke-linejoin="round"/></svg>
<svg style="position:absolute;left:1014.90px;top:523.05px" width="19.0" height="19.0" viewBox="0 0 20 20"><circle cx="10" cy="10" r="10" fill="#378A5C"/><path d="M5.9 10.2 L8.7 13.9 L13.9 6.3" fill="none" stroke="#fff" stroke-width="1.9" stroke-linecap="round" stroke-linejoin="round"/></svg>
<svg style="position:absolute;left:1065.80px;top:523.05px" width="19.0" height="19.0" viewBox="0 0 20 20"><circle cx="10" cy="10" r="10" fill="#378A5C"/><path d="M5.9 10.2 L8.7 13.9 L13.9 6.3" fill="none" stroke="#fff" stroke-width="1.9" stroke-linecap="round" stroke-linejoin="round"/></svg>
<svg style="position:absolute;left:1153.60px;top:522.95px" width="19.2" height="19.2" viewBox="0 0 20 20"><circle cx="10" cy="10" r="10" fill="#D14527"/><path d="M7.05 7.05 L12.95 12.95 M12.95 7.05 L7.05 12.95" fill="none" stroke="#fff" stroke-width="2" stroke-linecap="round"/></svg>
<svg style="position:absolute;left:1224.70px;top:522.95px" width="19.2" height="19.2" viewBox="0 0 20 20"><circle cx="10" cy="10" r="10" fill="#D14527"/><path d="M7.05 7.05 L12.95 12.95 M12.95 7.05 L7.05 12.95" fill="none" stroke="#fff" stroke-width="2" stroke-linecap="round"/></svg>
<div style="position:absolute;left:1297.20px;top:526.60px;width:64.00px;height:18.50px;background:#DFE1E6;border-radius:3px"></div>
<div class="t" style="left:1302.80px;top:529px;font-size:13.2px;color:#42526E;font-weight:700;">JUNIOR</div>
<div class="t" style="left:521.70px;top:570px;font-size:16.5px;color:#172B4D;font-weight:400;">5</div>
<div class="t" style="left:565.30px;top:571px;font-size:16.6px;color:#172B4D;font-weight:400;">Erin Lee</div>
<div class="t" style="left:676.30px;top:571px;font-size:16.6px;color:#172B4D;font-weight:400;">USA</div>
<svg style="position:absolute;left:770.50px;top:566.65px" width="19.2" height="19.2" viewBox="0 0 20 20"><circle cx="10" cy="10" r="10" fill="#D14527"/><path d="M7.05 7.05 L12.95 12.95 M12.95 7.05 L7.05 12.95" fill="none" stroke="#fff" stroke-width="2" stroke-linecap="round"/></svg>
<svg style="position:absolute;left:838.00px;top:566.65px" width="19.2" height="19.2" viewBox="0 0 20 20"><circle cx="10" cy="10" r="10" fill="#D14527"/><path d="M7.05 7.05 L12.95 12.95 M12.95 7.05 L7.05 12.95" fill="none" stroke="#fff" stroke-width="2" stroke-linecap="round"/></svg>
<svg style="position:absolute;left:952.10px;top:566.75px" width="19.0" height="19.0" viewBox="0 0 20 20"><circle cx="10" cy="10" r="10" fill="#378A5C"/><path d="M5.9 10.2 L8.7 13.9 L13.9 6.3" fill="none" stroke="#fff" stroke-width="1.9" stroke-linecap="round" stroke-linejoin="round"/></svg>
<svg style="position:absolute;left:1014.90px;top:566.75px" width="19.0" height="19.0" viewBox="0 0 20 20"><circle cx="10" cy="10" r="10" fill="#378A5C"/><path d="M5.9 10.2 L8.7 13.9 L13.9 6.3" fill="none" stroke="#fff" stroke-width="1.9" stroke-linecap="round" stroke-linejoin="round"/></svg>
<svg style="position:absolute;left:1065.80px;top:566.75px" width="19.0" height="19.0" viewBox="0 0 20 20"><circle cx="10" cy="10" r="10" fill="#378A5C"/><path d="M5.9 10.2 L8.7 13.9 L13.9 6.3" fill="none" stroke="#fff" stroke-width="1.9" stroke-linecap="round" stroke-linejoin="round"/></svg>
<svg style="position:absolute;left:1153.70px;top:566.75px" width="19.0" height="19.0" viewBox="0 0 20 20"><circle cx="10" cy="10" r="10" fill="#378A5C"/><path d="M5.9 10.2 L8.7 13.9 L13.9 6.3" fill="none" stroke="#fff" stroke-width="1.9" stroke-linecap="round" stroke-linejoin="round"/></svg>
<svg style="position:absolute;left:1224.80px;top:566.75px" width="19.0" height="19.0" viewBox="0 0 20 20"><circle cx="10" cy="10" r="10" fill="#378A5C"/><path d="M5.9 10.2 L8.7 13.9 L13.9 6.3" fill="none" stroke="#fff" stroke-width="1.9" stroke-linecap="round" stroke-linejoin="round"/></svg>
<div style="position:absolute;left:1297.20px;top:570.30px;width:64.00px;height:18.50px;background:#DEEBFF;border-radius:3px"></div>
<div class="t" style="left:1302.80px;top:573px;font-size:13.2px;color:#0747A6;font-weight:700;">MIDDLE</div>
<div class="t" style="left:521.70px;top:613px;font-size:16.5px;color:#172B4D;font-weight:400;">6</div>
<div class="t" style="left:565.30px;top:614px;font-size:16.6px;color:#172B4D;font-weight:400;">Molly</div>
<div class="t" style="left:565.30px;top:638px;font-size:16.6px;color:#172B4D;font-weight:400;">Gibney</div>
<div class="t" style="left:676.30px;top:614px;font-size:16.6px;color:#172B4D;font-weight:400;">UK</div>
<svg style="position:absolute;left:770.60px;top:609.85px" width="19.0" height="19.0" viewBox="0 0 20 20"><circle cx="10" cy="10" r="10" fill="#378A5C"/><path d="M5.9 10.2 L8.7 13.9 L13.9 6.3" fill="none" stroke="#fff" stroke-width="1.9" stroke-linecap="round" stroke-linejoin="round"/></svg>
<svg style="position:absolute;left:838.10px;top:609.85px" width="19.0" height="19.0" viewBox="0 0 20 20"><circle cx="10" cy="10" r="10" fill="#378A5C"/><path d="M5.9 10.2 L8.7 13.9 L13.9 6.3" fill="none" stroke="#fff" stroke-width="1.9" stroke-linecap="round" stroke-linejoin="round"/></svg>
<svg style="position:absolute;left:952.00px;top:609.75px" width="19.2" height="19.2" viewBox="0 0 20 20"><circle cx="10" cy="10" r="10" fill="#D14527"/><path d="M7.05 7.05 L12.95 12.95 M12.95 7.05 L7.05 12.95" fill="none" stroke="#fff" stroke-width="2" stroke-linecap="round"/></svg>
<svg style="position:absolute;left:1014.80px;top:609.75px" width="19.2" height="19.2" viewBox="0 0 20 20"><circle cx="10" cy="10" r="10" fill="#D14527"/><path d="M7.05 7.05 L12.95 12.95 M12.95 7.05 L7.05 12.95" fill="none" stroke="#fff" stroke-width="2" stroke-linecap="round"/></svg>
<svg style="position:absolute;left:1065.70px;top:609.75px" width="19.2" height="19.2" viewBox="0 0 20 20"><circle cx="10" cy="10" r="10" fill="#D14527"/><path d="M7.05 7.05 L12.95 12.95 M12.95 7.05 L7.05 12.95" fill="none" stroke="#fff" stroke-width="2" stroke-linecap="round"/></svg>
<svg style="position:absolute;left:1153.60px;top:609.75px" width="19.2" height="19.2" viewBox="0 0 20 20"><circle cx="10" cy="10" r="10" fill="#D14527"/><path d="M7.05 7.05 L12.95 12.95 M12.95 7.05 L7.05 12.95" fill="none" stroke="#fff" stroke-width="2" stroke-linecap="round"/></svg>
<svg style="position:absolute;left:1224.70px;top:609.75px" width="19.2" height="19.2" viewBox="0 0 20 20"><circle cx="10" cy="10" r="10" fill="#D14527"/><path d="M7.05 7.05 L12.95 12.95 M12.95 7.05 L7.05 12.95" fill="none" stroke="#fff" stroke-width="2" stroke-linecap="round"/></svg>
<div style="position:absolute;left:1297.20px;top:613.40px;width:64.00px;height:18.50px;background:#DFE1E6;border-radius:3px"></div>
<div class="t" style="left:1302.80px;top:616px;font-size:13.2px;color:#42526E;font-weight:700;">JUNIOR</div>
<div class="t" style="left:521.70px;top:677px;font-size:16.5px;color:#172B4D;font-weight:400;">7</div>
<div class="t" style="left:565.30px;top:678px;font-size:16.6px;color:#172B4D;font-weight:400;">Peter</div>
<div class="t" style="left:565.30px;top:702px;font-size:16.6px;color:#172B4D;font-weight:400;">Green</div>
<div class="t" style="left:676.30px;top:678px;font-size:16.6px;color:#172B4D;font-weight:400;">USA</div>
<svg style="position:absolute;left:770.60px;top:674.05px" width="19.0" height="19.0" viewBox="0 0 20 20"><circle cx="10" cy="10" r="10" fill="#378A5C"/><path d="M5.9 10.2 L8.7 13.9 L13.9 6.3" fill="none" stroke="#fff" stroke-width="1.9" stroke-linecap="round" stroke-linejoin="round"/></svg>
<svg style="position:absolute;left:838.10px;top:674.05px" width="19.0" height="19.0" viewBox="0 0 20 20"><circle cx="10" cy="10" r="10" fill="#378A5C"/><path d="M5.9 10.2 L8.7 13.9 L13.9 6.3" fill="none" stroke="#fff" stroke-width="1.9" stroke-linecap="round" stroke-linejoin="round"/></svg>
<svg style="position:absolute;left:952.10px;top:674.05px" width="19.0" height="19.0" viewBox="0 0 20 20"><circle cx="10" cy="10" r="10" fill="#378A5C"/><path d="M5.9 10.2 L8.7 13.9 L13.9 6.3" fill="none" stroke="#fff" stroke-width="1.9" stroke-linecap="round" stroke-linejoin="round"/></svg>
<svg style="position:absolute;left:1014.90px;top:674.05px" width="19.0" height="19.0" viewBox="0 0 20 20"><circle cx="10" cy="10" r="10" fill="#378A5C"/><path d="M5.9 10.2 L8.7 13.9 L13.9 6.3" fill="none" stroke="#fff" stroke-width="1.9" stroke-linecap="round" stroke-linejoin="round"/></svg>
<svg style="position:absolute;left:1065.80px;top:674.05px" width="19.0" height="19.0" viewBox="0 0 20 20"><circle cx="10" cy="10" r="10" fill="#378A5C"/><path d="M5.9 10.2 L8.7 13.9 L13.9 6.3" fill="none" stroke="#fff" stroke-width="1.9" stroke-linecap="round" stroke-linejoin="round"/></svg>
<svg style="position:absolute;left:1153.70px;top:674.05px" width="19.0" height="19.0" viewBox="0 0 20 20"><circle cx="10" cy="10" r="10" fill="#378A5C"/><path d="M5.9 10.2 L8.7 13.9 L13.9 6.3" fill="none" stroke="#fff" stroke-width="1.9" stroke-linecap="round" stroke-linejoin="round"/></svg>
<svg style="position:absolute;left:1224.80px;top:674.05px" width="19.0" height="19.0" viewBox="0 0 20 20"><circle cx="10" cy="10" r="10" fill="#378A5C"/><path d="M5.9 10.2 L8.7 13.9 L13.9 6.3" fill="none" stroke="#fff" stroke-width="1.9" stroke-linecap="round" stroke-linejoin="round"/></svg>
<div style="position:absolute;left:1297.20px;top:677.60px;width:64.00px;height:18.50px;background:#DEEBFF;border-radius:3px"></div>
<div class="t" style="left:1302.80px;top:680px;font-size:13.2px;color:#0747A6;font-weight:700;">MIDDLE</div>
</div>
<div style="position:absolute;left:193.00px;top:695.80px;width:1158.00px;height:61.20px;background:#F4F5F7"></div>
<div style="position:absolute;left:193.00px;top:695.60px;width:1158.00px;height:1.00px;background:#E1E3E8"></div>
<svg class="abs" style="left:216.5px;top:719.5px" width="19" height="15" viewBox="0 0 19 15">
<path d="M0.3 6.8 L8.8 0.6 L18.5 2.5 L10.5 9.5 Z" fill="#F4A03A"/>
<path d="M4 8 L4.5 13 C7 15 12 14.5 15 13 L15.5 7 L10.5 10.8 Z" fill="#F4A03A"/>
<path d="M15 5 L16.5 12.5" stroke="#F4A03A" stroke-width="1.4"/></svg>
<div class="t" style="left:237.5px;top:721px;font-size:16.6px;color:#505F79"><span style="color:#3F72B0">Take free course</span>. Post <span style="color:#3F72B0">Idea</span> or <span style="color:#3F72B0">Issue</span>.</div>
<div style="position:absolute;left:1128.00px;top:710.10px;width:62.70px;height:35.20px;background:#E4E6EA;border-radius:3px"></div>
<div class="t" style="left:1141.00px;top:721px;font-size:16.9px;color:#42526E;font-weight:400;">Back</div>
<div style="position:absolute;left:1208.00px;top:710.10px;width:57.40px;height:35.40px;background:#2152D1;border-radius:3px"></div>
<div class="t" style="left:1220.50px;top:721px;font-size:16.8px;color:#fff;font-weight:700;">Add</div>
<div class="t" style="left:1283.50px;top:721px;font-size:16.8px;color:#2B54C4;font-weight:400;">Close</div>
</div></div>
<svg class="abs" style="left:0;top:0" width="1536" height="896" viewBox="0 0 1536 896">
<path d="M1071 813.2 L1189 752" stroke="#F29B30" stroke-width="2.6" stroke-linecap="round"/>
<path d="M1198.2 747.3 L1183.9 747.6 L1190.2 758.1 Z" fill="#F29B30"/></svg>
</body></html>
